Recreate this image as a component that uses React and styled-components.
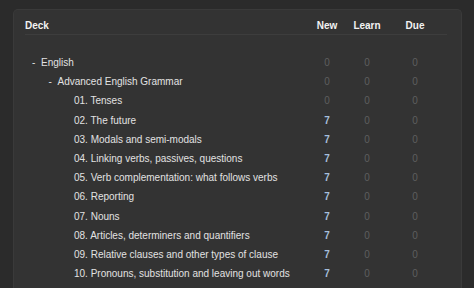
import React from "react";
import styled, { createGlobalStyle } from "styled-components";

const GlobalStyle = createGlobalStyle`
  html, body {
    margin: 0;
    padding: 0;
    background: #2b2b2b;
    font-family: "Liberation Sans", Arial, sans-serif;
    overflow: hidden;
  }
`;

const Page = styled.div`
  padding: 9px 12px 0 13px;
  height: 288px;
  box-sizing: border-box;
`;

const Panel = styled.div`
  background: #333333;
  border: 1px solid #3a3a3a;
  border-bottom: none;
  border-radius: 5px 5px 0 0;
  padding: 0 14px 0 11px;
  height: 400px;
`;

const Grid = styled.div`
  display: grid;
  grid-template-columns: 1fr 40px 40px 60px;
`;

const HeaderRow = styled(Grid)`
  border-bottom: 1px solid #3d3d3d;
  margin-bottom: 18px;
`;

const HeadCell = styled.div`
  font-size: 10px;
  font-weight: bold;
  color: #f2f2f2;
  line-height: 16px;
  padding-top: 8px;
  text-align: ${(p) => (p.$left ? "left" : "center")};
  padding-right: ${(p) => (p.$pr ? "4px" : "0")};
`;

const Row = styled(Grid)`
  height: 19.2px;
  align-items: center;
`;

const Name = styled.div`
  font-size: 10px;
  color: #e2e2e2;
  white-space: nowrap;
  padding-left: ${(p) => 7 + p.$level * 16.5}px;
  display: flex;
  align-items: center;
`;

const Collapse = styled.span`
  display: inline-block;
  width: 9px;
  color: #e2e2e2;
`;

const Count = styled.div`
  font-size: 10px;
  text-align: center;
  font-weight: ${(p) => (p.$new ? "bold" : "normal")};
  color: ${(p) => (p.$new ? "#a6bfdc" : "#5e5e5e")};
  padding-right: ${(p) => (p.$pr ? "4px" : "0")};
`;

const decks = [
  { name: "English", level: 0, parent: true, n: 0 },
  { name: "Advanced English Grammar", level: 1, parent: true, n: 0 },
  { name: "01. Tenses", level: 2, n: 0 },
  { name: "02. The future", level: 2, n: 7 },
  { name: "03. Modals and semi-modals", level: 2, n: 7 },
  { name: "04. Linking verbs, passives, questions", level: 2, n: 7 },
  { name: "05. Verb complementation: what follows verbs", level: 2, n: 7 },
  { name: "06. Reporting", level: 2, n: 7 },
  { name: "07. Nouns", level: 2, n: 7 },
  { name: "08. Articles, determiners and quantifiers", level: 2, n: 7 },
  { name: "09. Relative clauses and other types of clause", level: 2, n: 7 },
  { name: "10. Pronouns, substitution and leaving out words", level: 2, n: 7 },
];

export default function App() {
  return (
    <Page>
      <GlobalStyle />
      <Panel>
        <HeaderRow>
          <HeadCell $left>Deck</HeadCell>
          <HeadCell>New</HeadCell>
          <HeadCell>Learn</HeadCell>
          <HeadCell $pr>Due</HeadCell>
        </HeaderRow>
        {decks.map((d) => (
          <Row key={d.name}>
            <Name $level={d.level}>
              <Collapse>{d.parent ? "-" : ""}</Collapse>
              {d.name}
            </Name>
            <Count $new={d.n > 0}>{d.n}</Count>
            <Count>0</Count>
            <Count $pr>0</Count>
          </Row>
        ))}
      </Panel>
    </Page>
  );
}
